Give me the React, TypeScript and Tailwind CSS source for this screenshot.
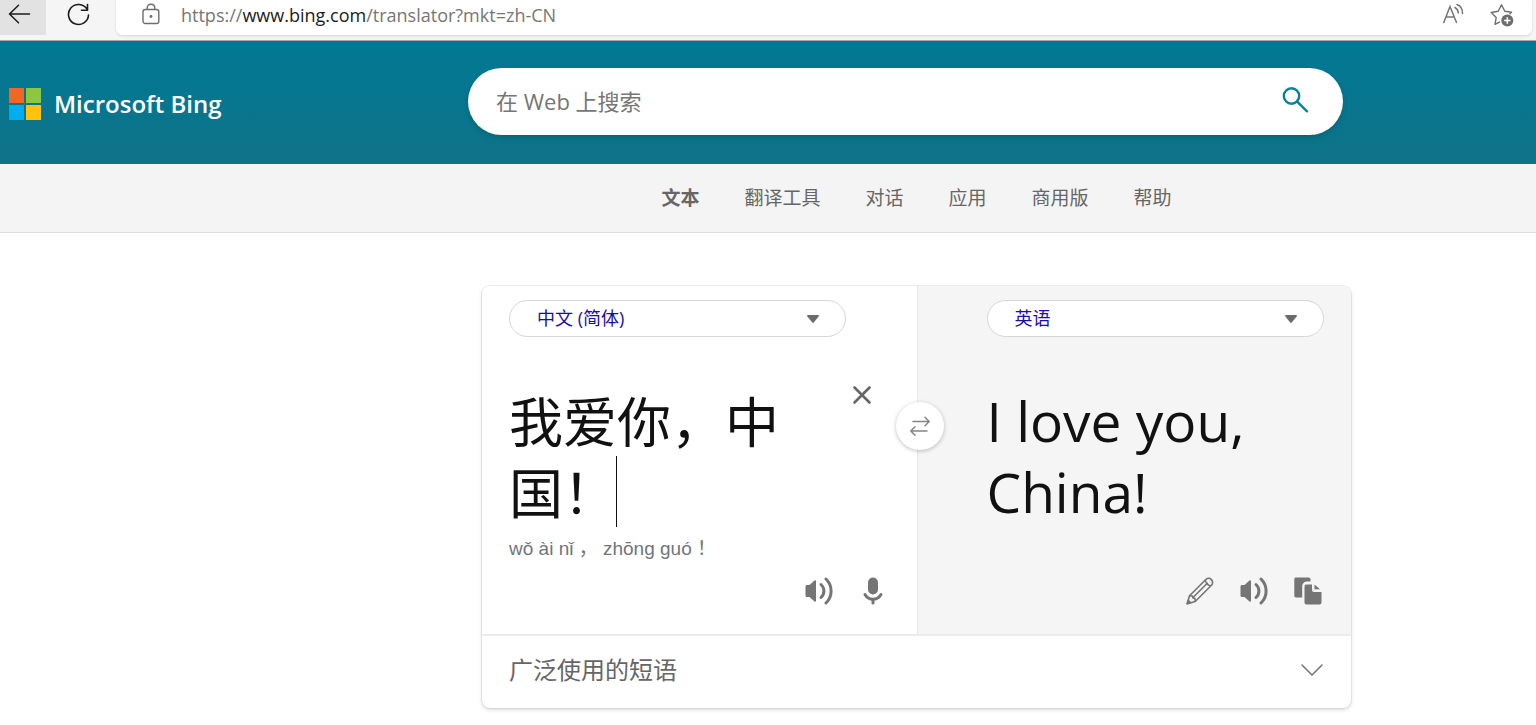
import { useState } from "react";
import type { ReactNode } from "react";

interface IconButtonProps {
  label: string;
  children: ReactNode;
}

const navItems = ["文本", "翻译工具", "对话", "应用", "商用版", "帮助"];

const IconButton = ({ label, children }: IconButtonProps) => (
  <button type="button" aria-label={label} className="flex h-8 w-8 items-center justify-center text-[#757575]">
    {children}
  </button>
);

const SpeakerIcon = () => (
  <svg viewBox="0 0 28 28" className="h-7 w-7" fill="none" stroke="currentColor" strokeWidth="3" strokeLinecap="round">
    <path d="M0.5 9.5 C0.5 8.6 1.1 8 2 8 H4.5 L9.5 3.6 C10.2 3 11 3.3 11 4.2 V23.8 C11 24.7 10.2 25 9.5 24.4 L4.5 20 H2 C1.1 20 0.5 19.4 0.5 18.5 Z" fill="currentColor" stroke="none" />
    <path d="M16 7.5 C19.9 11 19.9 17 16 20.5" />
    <path d="M21 2 C27.8 8.6 27.8 19.4 21 26" />
  </svg>
);

const MicIcon = () => (
  <svg viewBox="0 0 28 28" className="h-7 w-7" fill="none" stroke="currentColor" strokeWidth="3" strokeLinecap="round">
    <rect x="9" y="0.5" width="10" height="17" rx="5" fill="currentColor" stroke="none" />
    <path d="M6 17.5 C9.5 23.8 18.5 23.8 22 17.5 M14 22.5 V26" />
  </svg>
);

const PencilIcon = () => (
  <svg viewBox="0 0 28 28" className="h-7 w-7" fill="none" stroke="currentColor" strokeWidth="1.6" strokeLinejoin="round">
    <path d="M1.2 26.8 L3.5 18.8 L19.8 2.5 C21.3 1 23.8 1 25.4 2.6 C27 4.2 27 6.7 25.5 8.2 L9.2 24.5 Z" />
    <path d="M3.5 18.8 L6.4 19 L7 21 L9 21.6 L9.2 24.5 M7 20.5 L21.8 5.7 M19.3 3 C19.3 6 22 8.8 25 8.7" />
    <path d="M1.2 26.8 L2.2 23.3 L4.7 25.8 Z" fill="currentColor" />
  </svg>
);

const CopyIcon = () => (
  <svg viewBox="0 0 28 28" className="h-7 w-7" fill="currentColor">
    <path d="M2 0.5 H14.5 C15.9 0.5 16.5 1.3 16.5 2.5 V4.5 H13 C10.2 4.5 8.2 6.7 8.2 9.5 V20.5 H2 C1 20.5 0.3 19.8 0.3 18.8 V2.2 C0.3 1.2 1 0.5 2 0.5 Z" />
    <path d="M12.5 7.5 H18 V13 C18 14.1 18.9 15 20 15 H27.5 V25.5 C27.5 26.6 26.6 27.5 25.5 27.5 H12.5 C11.4 27.5 10.5 26.6 10.5 25.5 V9.5 C10.5 8.4 11.4 7.5 12.5 7.5 Z" />
    <path d="M20.5 7.5 L26 12.3 H20.5 Z" />
  </svg>
);

interface LanguageSelectProps {
  label: string;
  options: string[];
}

const LanguageSelect = ({ label, options }: LanguageSelectProps) => (
  <div className="relative h-[37px]">
    <select
      aria-label={label}
      className="h-full w-full appearance-none rounded-full border border-[#d6d6d6] bg-white px-[27px] pb-0.5 text-lg leading-6 text-[#1a0dab]"
    >
      {options.map((option) => (
        <option key={option}>{option}</option>
      ))}
    </select>
    <svg viewBox="0 0 12 8" className="pointer-events-none absolute top-[15px] right-[27px] h-2 w-3" fill="#6b6b6b">
      <path d="M1 0 H11 C12 0 12.3 0.9 11.6 1.6 L7 7.2 C6.4 7.9 5.6 7.9 5 7.2 L0.4 1.6 C-0.3 0.9 0 0 1 0 Z" />
    </svg>
  </div>
);

const BrowserBar = () => (
  <div className="flex h-[41px] items-start border-b border-[#a9a9a9] bg-[#f5f5f5]">
    <button type="button" aria-label="返回" className="flex h-[35px] w-[46px] items-start bg-[#e2e2e2] pt-1 pl-2">
      <svg viewBox="0 0 23 20" className="h-5 w-[23px]" fill="none" stroke="#1b1b1b" strokeWidth="1.5" strokeLinecap="round" strokeLinejoin="round">
        <path d="M21.5 10 H1.5 M10.5 1.3 L1.5 10 L10.5 18.7" />
      </svg>
    </button>
    <button type="button" aria-label="刷新" className="flex h-[35px] w-[70px] items-start pt-[3px] pl-[21px]">
      <svg viewBox="0 0 24 24" className="h-6 w-6" fill="none" stroke="#1b1b1b" strokeWidth="1.6" strokeLinecap="round" strokeLinejoin="round">
        <path d="M20 6.2 A10 10 0 1 0 21.5 12 M20.5 1.5 V7.2 H14.5" />
      </svg>
    </button>
    <div className="mr-1 flex h-[35px] flex-1 items-start rounded-b-md bg-white pl-[26px] shadow-sm">
      <svg viewBox="0 0 18 22" className="mt-[3px] h-[22px] w-[18px] shrink-0" fill="none" stroke="#6e6e6e" strokeWidth="1.4">
        <rect x="1" y="6.5" width="15.8" height="14" rx="2.2" />
        <path d="M5.2 6.5 V5 C5.2 2.6 6.7 1.2 9 1.2 C11.3 1.2 12.8 2.6 12.8 5 V6.5" />
        <circle cx="9" cy="13.5" r="1.4" fill="#6e6e6e" stroke="none" />
      </svg>
      <p className="ml-[21px] flex-1 text-lg leading-[30px] text-[#767676]">
        https://<span className="text-[#1b1b1b]">www.bing.com</span>/translator?mkt=zh-CN
      </p>
      <button type="button" aria-label="大声朗读" className="mt-[3px] mr-[26px]">
        <svg viewBox="0 0 22 22" className="h-[22px] w-[22px]" fill="none" stroke="#757575" strokeWidth="1.5" strokeLinecap="round">
          <path d="M1.8 19.5 L8 3.5 L14.5 19.5 M4 14 H12" />
          <path d="M13 4.5 C15 5.6 16.2 7.5 16.2 10 M15 1.5 C18.6 3 20.7 6.4 20.5 10.5" />
        </svg>
      </button>
      <button type="button" aria-label="收藏" className="mt-[3px] mr-[18px]">
        <svg viewBox="0 0 24 24" className="h-6 w-6" fill="none" stroke="#6e6e6e" strokeWidth="1.4" strokeLinejoin="round">
          <path d="M10 18.8 L5 21.3 L6.2 14.5 L1.2 9.5 L8.2 8.2 L11.5 1.8 L14.8 8.2 L21.5 9.3 L19.5 11.2" />
          <circle cx="17.3" cy="17.5" r="6" fill="#6e6e6e" stroke="none" />
          <path d="M17.3 14.3 V20.7 M14.1 17.5 H20.5" stroke="#fff" strokeWidth="1.5" />
        </svg>
      </button>
    </div>
  </div>
);

const Header = () => (
  <header className="flex h-[123px] items-start bg-linear-to-b from-[#007894] to-[#0e7388] pt-[27px] pr-[193px]">
    <a href="#" className="flex w-[468px] shrink-0 items-center gap-[13px] pt-5 pl-[9px]">
      <span className="grid h-8 w-8 grid-cols-2 gap-[2px]">
        <span className="bg-[#f26522]" />
        <span className="bg-[#8dc63f]" />
        <span className="bg-[#00aeef]" />
        <span className="bg-[#ffc20e]" />
      </span>
      <span className="text-2xl font-semibold text-white">Microsoft Bing</span>
    </a>
    <form className="flex h-[67px] min-w-0 flex-1 items-center rounded-full bg-white pr-[34px] pl-7 shadow-md">
      <input
        type="search"
        aria-label="在 Web 上搜索"
        placeholder="在 Web 上搜索"
        className="min-w-0 flex-1 text-[22px] text-[#444] outline-none placeholder:text-[#767676]"
      />
      <button type="button" aria-label="搜索" className="mb-1">
        <svg viewBox="0 0 28 28" className="h-7 w-7" fill="none" stroke="#078398" strokeWidth="2.4" strokeLinecap="round">
          <circle cx="10.5" cy="10" r="7.7" />
          <path d="M16.2 15.7 L26 25.3" />
        </svg>
      </button>
    </form>
  </header>
);

export default function App() {
  const [source, setSource] = useState("我爱你，中国！");

  return (
    <div className="min-h-screen bg-white font-['Open_Sans','Noto_Sans_CJK_SC',sans-serif]">
      <BrowserBar />
      <Header />

      <nav className="flex h-[69px] items-center justify-center gap-[45px] border-b border-[#dedede] bg-[#f4f4f4] pr-[185px] pl-[482px]">
        {navItems.map((item, i) => (
          <a
            key={item}
            href="#"
            className={`text-[19px] leading-7 whitespace-nowrap text-[#666] ${i === 0 ? "font-bold" : ""}`}
          >
            {item}
          </a>
        ))}
      </nav>

      <main className="pt-[53px] pr-[185px] pb-4 pl-[482px]">
        <div className="rounded-lg bg-white shadow-[0_0_0_1px_rgba(0,0,0,0.06),0_2px_4px_rgba(0,0,0,0.14)]">
          <div className="relative grid h-[348px] grid-cols-2">
            <section className="flex flex-col pt-[14px] pl-[27px]">
              <div className="pr-[71px]">
                <LanguageSelect label="源语言" options={["中文 (简体)", "英语"]} />
              </div>
              <div className="mt-12 flex items-start justify-between pr-[45px]">
                <div className="relative">
                  <textarea
                    aria-label="源文本"
                    value={source}
                    onChange={(e) => setSource(e.target.value)}
                    className="block h-36 w-[310px] resize-none overflow-hidden pt-0.5 text-[54px] leading-[71px] text-[#111] outline-none"
                  />
                  <span className="absolute bottom-0.5 left-[107px] h-[71px] w-px bg-[#111]" />
                </div>
                <button type="button" aria-label="清除">
                  <svg viewBox="0 0 20 20" className="h-5 w-5" fill="none" stroke="#666" strokeWidth="2.6" strokeLinecap="round">
                    <path d="M2.5 2.5 L17.5 17.5 M17.5 2.5 L2.5 17.5" />
                  </svg>
                </button>
              </div>
              <p className="mt-1.5 font-['Liberation_Sans','Noto_Sans_CJK_SC',sans-serif] text-[19px] leading-7 text-[#70757a]">
                wǒ ài nǐ ， zhōng guó ！
              </p>
              <div className="mt-3 flex justify-end gap-[22px] pr-7">
                <IconButton label="朗读源文本">
                  <SpeakerIcon />
                </IconButton>
                <IconButton label="语音输入">
                  <MicIcon />
                </IconButton>
              </div>
            </section>

            <section className="flex flex-col rounded-tr-lg border-l border-[#e8e8e8] bg-[#f5f5f5] pt-[14px] pr-[27px] pl-[69px]">
              <LanguageSelect label="目标语言" options={["英语", "中文 (简体)"]} />
              <p className="mt-12 h-36 text-[55px] leading-[71px] text-[#111]">I love you, China!</p>
              <div className="mt-[46px] flex justify-end gap-[22px]">
                <IconButton label="建议编辑">
                  <PencilIcon />
                </IconButton>
                <IconButton label="朗读译文">
                  <SpeakerIcon />
                </IconButton>
                <IconButton label="复制">
                  <CopyIcon />
                </IconButton>
              </div>
            </section>

            <button
              type="button"
              aria-label="交换语言"
              className="absolute top-[116px] left-1/2 flex h-12 w-12 -translate-x-[21px] items-center justify-center rounded-full bg-white shadow-[0_1px_4px_rgba(0,0,0,0.25)]"
            >
              <svg viewBox="0 0 20 20" className="h-5 w-5" fill="none" stroke="#858585" strokeWidth="1.5" strokeLinecap="round" strokeLinejoin="round">
                <path d="M3 5.5 H19 M15 1.3 L19.2 5.5 L15 9.7" />
                <path d="M17 15 H1 M5 10.8 L0.8 15 L5 19.2" />
              </svg>
            </button>
          </div>

          <button type="button" className="flex h-[74px] w-full items-center justify-between border-t-2 border-[#ececec] pr-7 pb-1 pl-[27px] text-2xl text-[#666]">
            广泛使用的短语
            <svg viewBox="0 0 22 12" className="h-3 w-[22px]" fill="none" stroke="#757575" strokeWidth="1.5" strokeLinecap="round">
              <path d="M1 1 L11 11 L21 1" />
            </svg>
          </button>
        </div>
      </main>
    </div>
  );
}
